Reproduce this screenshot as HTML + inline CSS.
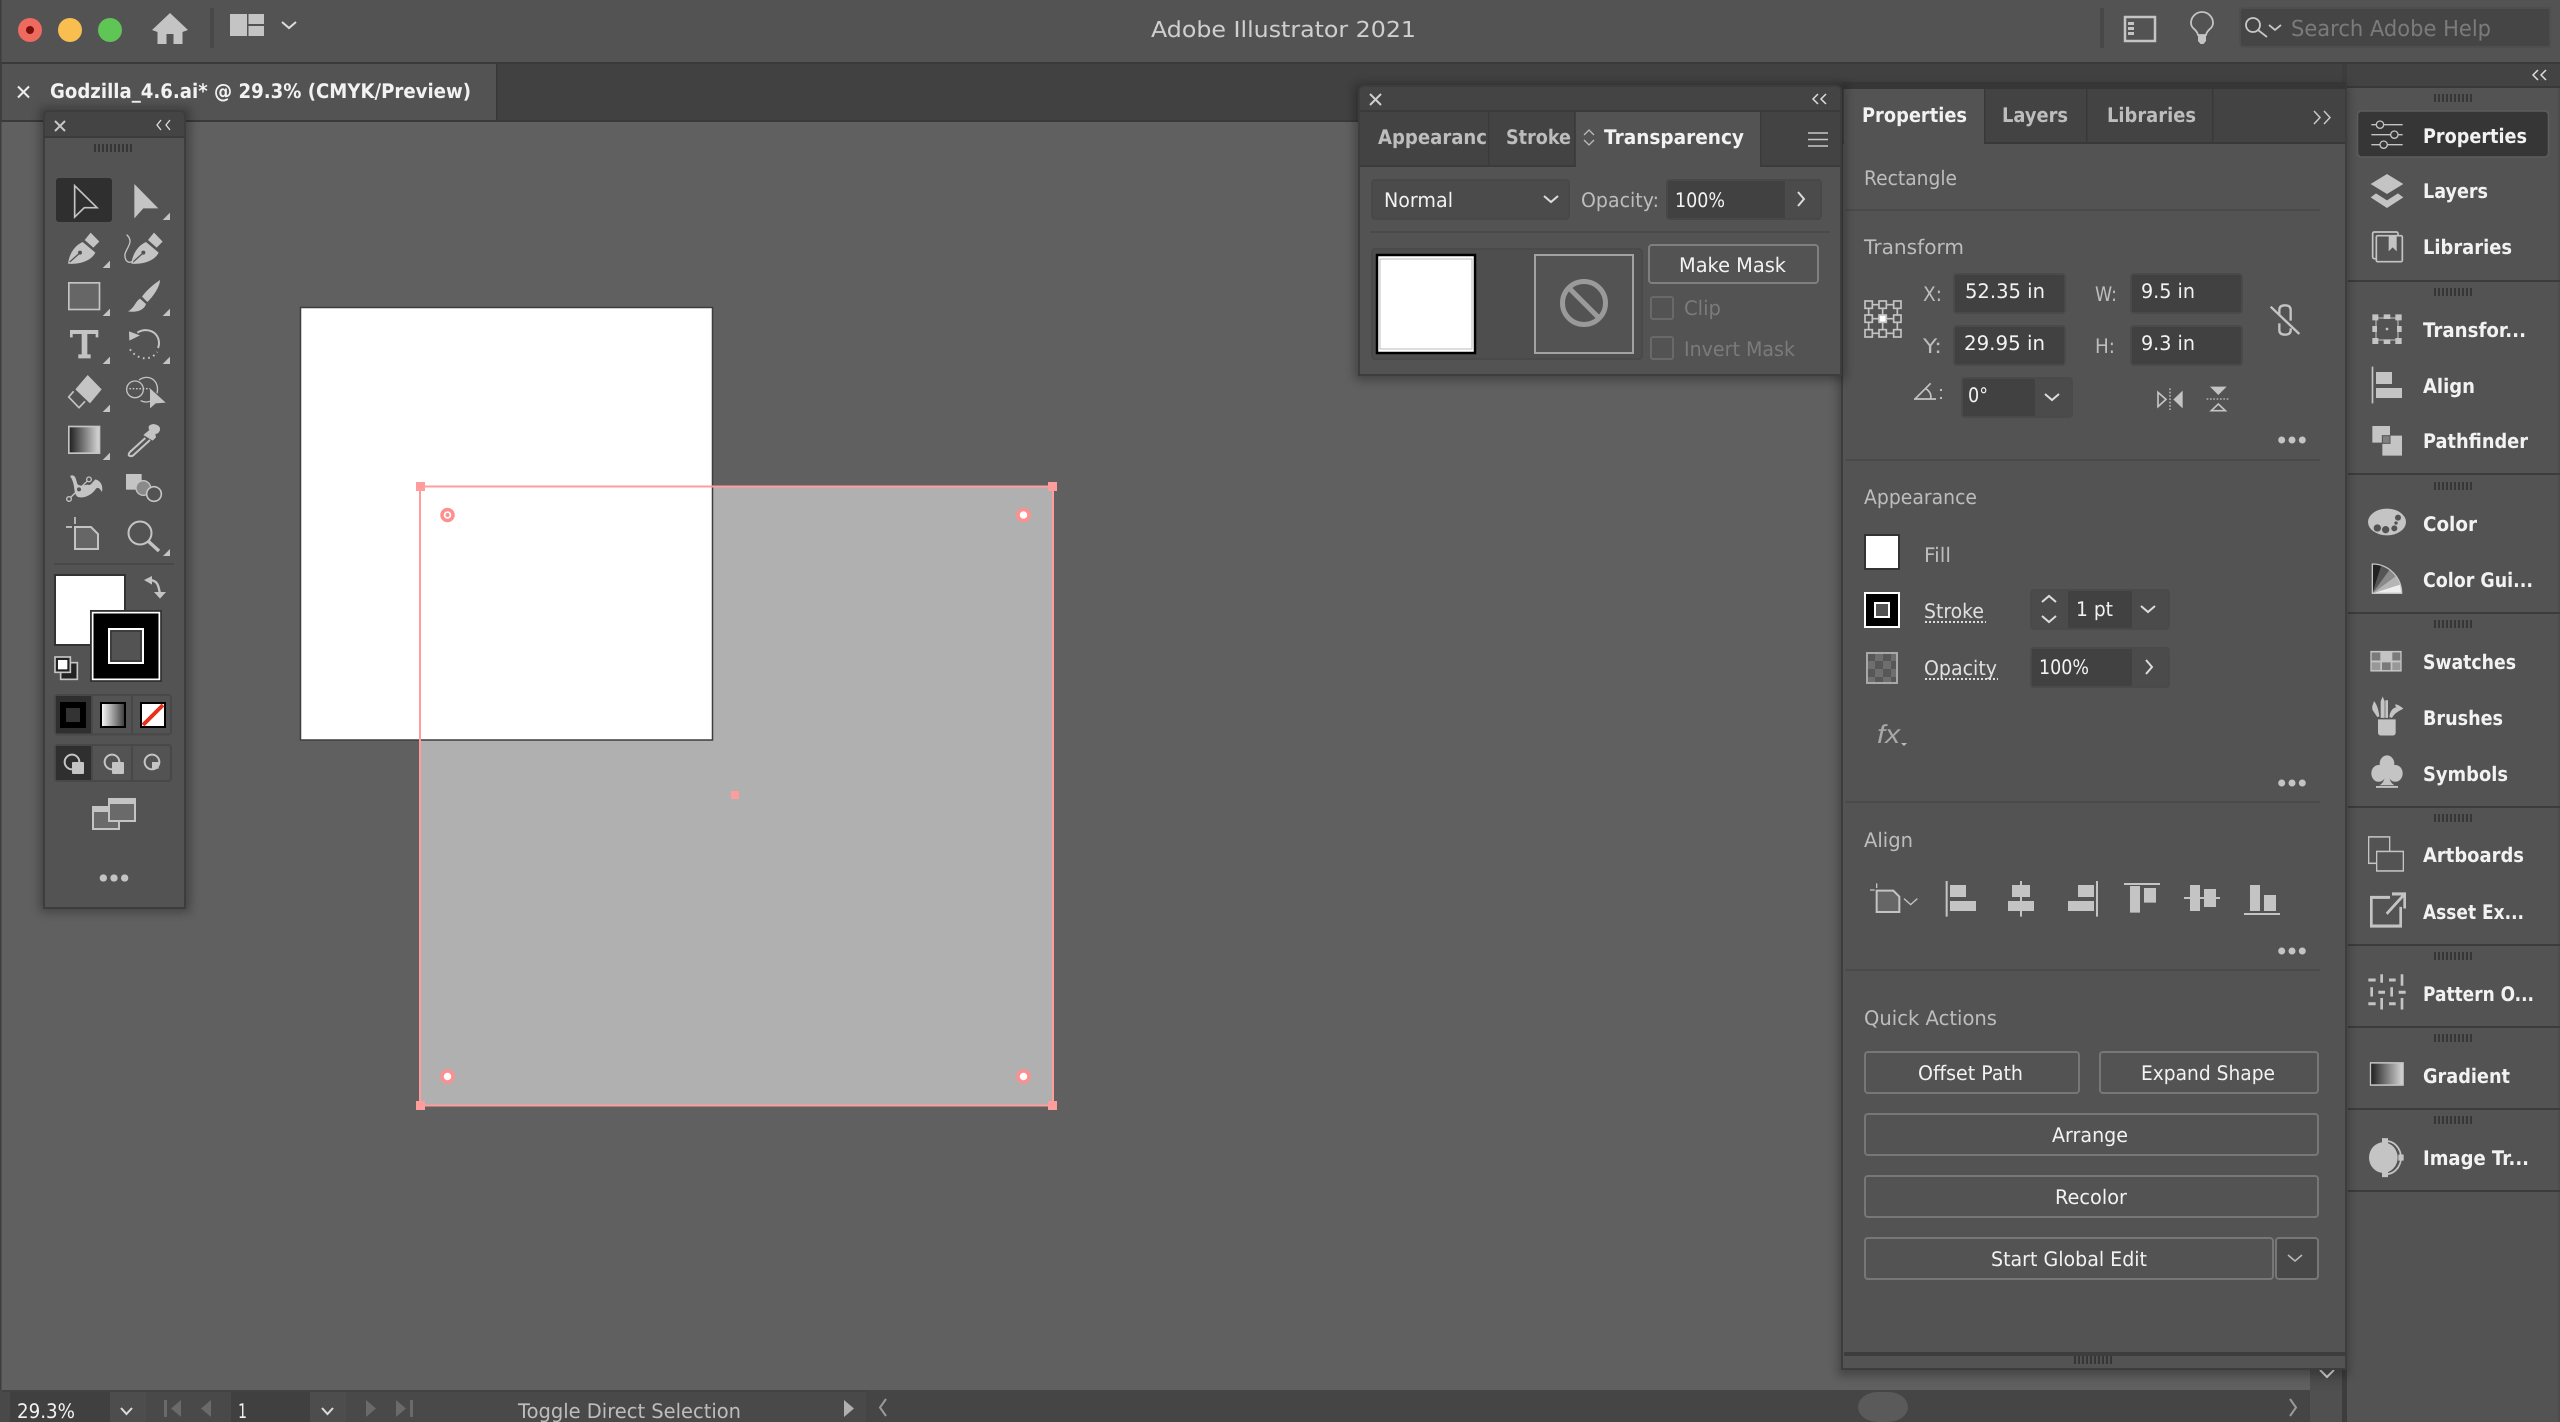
<!DOCTYPE html>
<html><head><meta charset="utf-8"><title>Adobe Illustrator 2021</title>
<style>
html,body{margin:0;padding:0;background:#606060;overflow:hidden}
svg{display:block}
text{font-family:"DejaVu Sans","Liberation Sans",sans-serif;font-size:20px;text-rendering:geometricPrecision}
.b{font-weight:bold}
.w{fill:#f2f2f2}.g{fill:#bdbdbd}.d{fill:#7b7b7b}
.i{fill:#c4c4c4}
.s{fill:none;stroke:#c4c4c4}
.c{fill:none;stroke:#dcdcdc;stroke-width:2}
</style></head><body>
<svg xmlns="http://www.w3.org/2000/svg" width="2560" height="1422" viewBox="0 0 2560 1422">
<defs>
<filter id="sh" x="-20%" y="-20%" width="140%" height="140%"><feGaussianBlur stdDeviation="5"/></filter>
<linearGradient id="gr"><stop offset="0" stop-color="#1e1e1e"/><stop offset="1" stop-color="#d8d8d8"/></linearGradient>
<linearGradient id="gw"><stop offset="0" stop-color="#fff"/><stop offset="1" stop-color="#3a3a3a"/></linearGradient>
<pattern id="ck" x="1867" y="653" width="16" height="16" patternUnits="userSpaceOnUse"><rect width="16" height="16" fill="#6e6e6e"/><rect width="8" height="8" fill="#575757"/><rect x="8" y="8" width="8" height="8" fill="#575757"/></pattern>
</defs>

<!-- canvas -->
<rect width="2560" height="1422" fill="#606060"/>

<!-- artwork -->
<rect x="420" y="486" width="633" height="619" fill="#b0b0b0"/>
<rect x="300.5" y="307.5" width="412" height="432.5" fill="#fff" stroke="#3d3d3d" stroke-width="1.5"/>
<rect x="420" y="486.5" width="633" height="619" fill="none" stroke="#ff9c9c" stroke-width="2"/>
<g fill="#ff9c9c"><rect x="416" y="482" width="9" height="9"/><rect x="1048" y="482" width="9" height="9"/><rect x="416" y="1101" width="9" height="9"/><rect x="1048" y="1101" width="9" height="9"/><rect x="731" y="791" width="8" height="8"/></g>
<g fill="#fff" stroke="#ff8f8f" stroke-width="3.500"><circle cx="447.500" cy="515" r="5.500"/><circle cx="1023.500" cy="515" r="5.500"/><circle cx="447.500" cy="1076.500" r="5.500"/><circle cx="1023.500" cy="1076.500" r="5.500"/></g>
<circle cx="447.500" cy="515" r="2" fill="#ff8f8f"/>

<!-- top bar -->
<rect width="2560" height="62" fill="#535353"/>
<rect y="62" width="2560" height="2" fill="#3a3a3a"/>
<circle cx="30" cy="30" r="12" fill="#ef6a5e"/><circle cx="30" cy="30" r="4" fill="#7a0f0a"/>
<circle cx="70" cy="30" r="12" fill="#f8bf50"/><circle cx="110" cy="30" r="12" fill="#5fc555"/>
<path class="i" d="M170 13 L188 30 L182.500 32 V44 H173.500 V34 H166.500 V44 H157.500 V32 L152 30Z"/>
<rect x="210" y="8" width="4" height="40" fill="#484848"/>
<path class="i" d="M230 14H247V36H230ZM248.500 14H264V24H248.500ZM248.500 26H264V36H248.500Z"/>
<path class="c" d="M282 22l7 6 7-6"/>
<text x="1151" y="37" textLength="265" lengthAdjust="spacingAndGlyphs" fill="#cfcfcf" style="font-size:22px">Adobe Illustrator 2021</text>
<rect x="2100" y="8" width="4" height="40" fill="#484848"/>
<rect x="2125" y="17" width="30" height="24" fill="none" stroke="#c4c4c4" stroke-width="2.500"/>
<path class="i" d="M2128 22h6v3h-6zM2128 27h6v3h-6zM2128 32h6v3h-6z"/>
<path class="s" stroke-width="1.800" d="M2198 35 C2197 29 2191 29 2191 23 A11 11 0 0 1 2213 23 C2213 29 2207 29 2206 35Z"/>
<path class="i" d="M2198 35h8v6l-2.500 3h-3l-2.500-3z"/>
<path d="M2550 8H2244Q2240 8 2240 12V43Q2240 47 2244 47H2550Z" fill="#454545" stroke="#4e4e4e" stroke-width="2"/>
<circle cx="2253" cy="25" r="7" fill="none" stroke="#c8c8c8" stroke-width="1.800"/>
<path class="s" stroke-width="1.800" d="M2258 30l9 7M2269 25l6 5 6-5"/>
<text x="2291" y="36" textLength="200" lengthAdjust="spacingAndGlyphs" class="d" style="font-size:22px">Search Adobe Help</text>

<!-- tab strip -->
<rect y="64" width="2560" height="56" fill="#414141"/>
<rect y="120" width="1359" height="2" fill="#3a3a3a"/>
<rect x="2" y="64" width="494" height="56" fill="#535353"/>
<rect x="496" y="64" width="1.500" height="56" fill="#383838"/>
<rect x="0" y="0" width="1.500" height="1422" fill="#3d3d3d"/>
<path d="M18 86.500l11 11M29 86.500l-11 11" stroke="#eee" stroke-width="2" fill="none"/>
<text x="50" y="98" textLength="421" lengthAdjust="spacingAndGlyphs" class="b w">Godzilla_4.6.ai* @ 29.3% (CMYK/Preview)</text>

<!-- status bar -->
<rect y="1390" width="2345" height="32" fill="#494949"/>
<rect y="1390" x="2" width="864" height="2" fill="#424242"/>
<rect x="866" y="1390" width="1444" height="32" fill="#454545"/>
<rect x="10" y="1392" width="100" height="30" fill="#404040"/>
<rect x="231" y="1392" width="79" height="30" fill="#404040"/>
<rect x="110" y="1392" width="36" height="30" fill="#4d4d4d"/>
<rect x="310" y="1392" width="36" height="30" fill="#4d4d4d"/>
<text x="17" y="1418" textLength="58" lengthAdjust="spacingAndGlyphs" class="w">29.3%</text>
<text x="238" y="1418" textLength="9" lengthAdjust="spacingAndGlyphs" class="w">1</text>
<path class="c" d="M121 1408l5.500 6 5.500-6M322 1408l5.500 6 5.500-6"/>
<g fill="#6a6a6a"><path d="M164 1400h3v17h-3zM181 1400v17l-10-8.500zM211 1400v17l-10-8.500zM366 1400v17l10-8.500zM396 1400v17l10-8.500zM410 1400h3v17h-3z"/></g>
<text x="518" y="1418" textLength="223" lengthAdjust="spacingAndGlyphs" class="g">Toggle Direct Selection</text>
<path d="M844 1400v17l10-8.500z" fill="#b0b0b0"/>
<path d="M886 1399l-6 8.500 6 8.500M2290 1399l6 8.500-6 8.500" fill="none" stroke="#9a9a9a" stroke-width="2"/>
<rect x="1858" y="1392" width="50" height="30" rx="20" fill="#5a5a5a"/>
<rect x="2310" y="1369" width="32" height="21" fill="#4e4e4e"/>
<rect x="2310" y="1390" width="32" height="32" fill="#505050"/>
<path class="c" d="M2320 1370l7 7 7-7"/>
<rect x="2342" y="64" width="6" height="1358" fill="#3d3d3d"/>

<!-- dock -->
<rect x="2347" y="64" width="213" height="1358" fill="#535353"/>
<rect x="2347" y="64" width="213" height="22" fill="#434343"/>
<rect x="2347" y="86" width="213" height="2" fill="#393939"/>
<rect x="2558" y="88" width="2" height="1334" fill="#4c4c4c"/>
<path d="M2538 70l-5 5 5 5M2546 70l-5 5 5 5" fill="none" stroke="#ddd" stroke-width="1.500"/>
<rect x="2357.500" y="111" width="191" height="46" rx="4" fill="#363636" stroke="#5d5d5d" stroke-width="1.500"/>
<g fill="#3c3c3c"><rect x="2348" y="280" width="212" height="2"/><rect x="2348" y="473" width="212" height="2"/><rect x="2348" y="612" width="212" height="2"/><rect x="2348" y="806" width="212" height="2"/><rect x="2348" y="944" width="212" height="2"/><rect x="2348" y="1026" width="212" height="2"/><rect x="2348" y="1108" width="212" height="2"/><rect x="2348" y="1190" width="212" height="2"/></g>
<path fill="none" stroke="#363636" stroke-width="8" stroke-dasharray="2 2" d="M2434 98H2472M2434 292H2472M2434 486H2472M2434 624H2472M2434 818H2472M2434 956H2472M2434 1038H2472M2434 1120H2472"/>
<g class="b w">
<text class="b w" x="2423" y="143" textLength="104" lengthAdjust="spacingAndGlyphs">Properties</text>
<text class="b w" x="2423" y="198" textLength="65" lengthAdjust="spacingAndGlyphs">Layers</text>
<text class="b w" x="2423" y="254" textLength="89" lengthAdjust="spacingAndGlyphs">Libraries</text>
<text class="b w" x="2423" y="337" textLength="103" lengthAdjust="spacingAndGlyphs">Transfor...</text>
<text class="b w" x="2423" y="393" textLength="52" lengthAdjust="spacingAndGlyphs">Align</text>
<text class="b w" x="2423" y="448" textLength="105" lengthAdjust="spacingAndGlyphs">Pathfinder</text>
<text class="b w" x="2423" y="531" textLength="54" lengthAdjust="spacingAndGlyphs">Color</text>
<text class="b w" x="2423" y="587" textLength="110" lengthAdjust="spacingAndGlyphs">Color Gui...</text>
<text class="b w" x="2423" y="669" textLength="93" lengthAdjust="spacingAndGlyphs">Swatches</text>
<text class="b w" x="2423" y="725" textLength="80" lengthAdjust="spacingAndGlyphs">Brushes</text>
<text class="b w" x="2423" y="781" textLength="85" lengthAdjust="spacingAndGlyphs">Symbols</text>
<text class="b w" x="2423" y="862" textLength="101" lengthAdjust="spacingAndGlyphs">Artboards</text>
<text class="b w" x="2423" y="919" textLength="101" lengthAdjust="spacingAndGlyphs">Asset Ex...</text>
<text class="b w" x="2423" y="1001" textLength="111" lengthAdjust="spacingAndGlyphs">Pattern O...</text>
<text class="b w" x="2423" y="1083" textLength="87" lengthAdjust="spacingAndGlyphs">Gradient</text>
<text class="b w" x="2423" y="1165" textLength="106" lengthAdjust="spacingAndGlyphs">Image Tr...</text>
</g>
<!-- dock icons top -->
<g transform="translate(2340,90) scale(.33333)">
<path class="s" stroke-width="4" d="M94 104H188M94 134H188M94 164H188"/>
<g fill="#363636" stroke="#c4c4c4" stroke-width="4"><circle cx="120" cy="104" r="11"/><circle cx="163" cy="134" r="11"/><circle cx="131" cy="164" r="11"/></g>
<path class="i" d="M141 252L190 282L141 312L92 282Z"/>
<path class="i" d="M92 322L108 310L141 331L174 310L190 322L141 354Z"/>
<rect x="98" y="426" width="76" height="80" rx="5" fill="none" stroke="#c4c4c4" stroke-width="5"/>
<rect x="109" y="437" width="78" height="78" rx="4" fill="#535353" stroke="#c4c4c4" stroke-width="5"/>
<path class="i" d="M146 437H170V484L158 472L146 484Z"/>
<rect x="108" y="684" width="66" height="66" fill="none" stroke="#c4c4c4" stroke-width="3"/>
<path class="i" d="M97 673h18v18h-18zM131 673h20v14h-20zM166 673h19v18h-19zM97 708h14v18h-14zM171 708h14v18h-14zM97 744h18v18h-18zM131 748h20v14h-20zM166 744h19v18h-19z"/>
<circle class="i" cx="141" cy="717" r="4"/>
<path class="i" d="M95 830h5v110h-5zM108 846h48v36h-48zM108 894h78v30h-78z"/>
<path class="i" d="M97 1008h53v50h-53zM127 1037h59v60h-59z"/>
<rect x="127" y="1037" width="23" height="23" fill="#7f7f7f" stroke="#535353" stroke-width="3"/>
<ellipse class="i" cx="141" cy="1296" rx="57" ry="40"/>
<g fill="#535353"><circle cx="112" cy="1314" r="11"/><circle cx="137" cy="1319" r="11"/><circle cx="163" cy="1315" r="9"/><circle cx="174" cy="1283" r="9"/><circle cx="168" cy="1299" r="5"/></g>
<path d="M97 1510L97 1422A88 88 0 0 1 124 1426Z" fill="#222"/><path d="M97 1510L124 1426A88 88 0 0 1 149 1439Z" fill="#555"/><path d="M97 1510L149 1439A88 88 0 0 1 168 1458Z" fill="#8a8a8a"/><path d="M97 1510L168 1458A88 88 0 0 1 181 1483Z" fill="#b5b5b5"/><path d="M97 1510L181 1483A88 88 0 0 1 185 1510Z" fill="#eee"/>
<path class="s" stroke-width="4" d="M97 1510V1422A88 88 0 0 1 185 1510Z"/>
</g>
<!-- dock icons bottom -->
<g transform="translate(2340,600) scale(.33333,.3827)">
<rect x="91" y="133" width="94" height="54" class="i"/>
<g fill="#7a7a7a"><rect x="95" y="137" width="26" height="21"/><rect x="157" y="137" width="24" height="21"/><rect x="126" y="163" width="26" height="20"/></g>
<g fill="#989898"><rect x="95" y="163" width="26" height="20"/><rect x="157" y="163" width="24" height="20"/></g>
<path class="i" d="M114 312h53v34q0 8-8 8h-37q-8 0-8-8zM122 308V265L128 252L134 265V308ZM136 308V262H144V308ZM148 306C150 290 158 282 170 280C158 272 170 268 190 284C178 290 165 294 156 308ZM112 306L98 288C94 278 100 272 102 264C110 272 116 286 118 304Z"/>
<circle class="i" cx="141" cy="428" r="22"/><circle class="i" cx="116" cy="453" r="22"/><circle class="i" cx="166" cy="453" r="22"/>
<path class="i" d="M136 445H146C146 465 150 478 164 484H118C132 478 136 465 136 445ZM108 486h66v5h-66z"/>
<rect x="86" y="619" width="63" height="69" fill="none" stroke="#c4c4c4" stroke-width="4"/>
<rect x="110" y="657" width="80" height="51" fill="#535353" stroke="#c4c4c4" stroke-width="4"/>
<path class="s" stroke-width="8" d="M150 777H94V852H182V802M140 820L190 772"/>
<path class="i" d="M156 764H198V806H190V772H156Z"/>
<path class="s" stroke-width="8" d="M85 993H107M147 993H167M125 978V1000M186 978V1008M95 1012V1036M115 1025H135M155 1012V1036M176 1025H197M85 1055H107M147 1055H167M125 1040V1070M186 1040V1070"/>
<rect x="91.500" y="1209.500" width="98" height="58" fill="url(#gr)" stroke="#c4c4c4" stroke-width="4"/>
<ellipse class="i" cx="130" cy="1457" rx="43" ry="40"/>
<path class="s" stroke-width="5" d="M135 1414A44 44 0 0 1 183 1457A44 44 0 0 1 135 1500"/>
<path class="i" d="M126 1406h18v15h-18zM175 1449h16v16h-16zM126 1493h18v15h-18z"/>
</g>

<!-- properties panel -->
<rect x="1838" y="86" width="510" height="1290" fill="#000" opacity=".28" filter="url(#sh)"/>
<rect x="1842" y="88" width="504" height="1281" fill="#535353" stroke="#3d3d3d" stroke-width="2"/>
<rect x="1843" y="82" width="503" height="7" fill="#363636"/>
<rect x="1843" y="89" width="502" height="53" fill="#434343"/>
<rect x="1843" y="142" width="502" height="2" fill="#393939"/>
<rect x="1844" y="89" width="140" height="55" fill="#535353"/>
<rect x="1984" y="89" width="1.500" height="54" fill="#393939"/>
<rect x="2086" y="89" width="1.500" height="54" fill="#393939"/>
<rect x="2212" y="89" width="1.500" height="54" fill="#393939"/>
<text class="b w" x="1862" y="122" textLength="105" lengthAdjust="spacingAndGlyphs">Properties</text>
<text class="b g" x="2002" y="122" textLength="66" lengthAdjust="spacingAndGlyphs">Layers</text>
<text class="b g" x="2107" y="122" textLength="89" lengthAdjust="spacingAndGlyphs">Libraries</text>
<path d="M2314 111l6 6.500-6 6.500M2324 111l6 6.500-6 6.500" fill="none" stroke="#c8c8c8" stroke-width="1.500"/>
<g fill="#4a4a4a"><rect x="1845" y="209" width="475" height="2"/><rect x="1845" y="459" width="475" height="2"/><rect x="1845" y="801" width="475" height="2"/><rect x="1845" y="969" width="475" height="2"/></g>
<text class="g" x="1864" y="185" textLength="93" lengthAdjust="spacingAndGlyphs">Rectangle</text>
<text class="g" x="1864" y="254" textLength="100" lengthAdjust="spacingAndGlyphs">Transform</text>
<g transform="translate(1840,80) scale(.33333)">
<path class="s" stroke-width="5" d="M98 674H116M140 674H160M98 716H116M140 716H160M98 760H116M140 760H160M86 686V704M86 728V748M128 686V704M128 728V748M172 686V704M172 728V748"/>
<g fill="none" stroke="#c4c4c4" stroke-width="5"><rect x="75" y="663" width="22" height="22"/><rect x="117" y="663" width="22" height="22"/><rect x="161" y="663" width="22" height="22"/><rect x="75" y="705" width="22" height="22"/><rect x="161" y="705" width="22" height="22"/><rect x="75" y="749" width="22" height="22"/><rect x="117" y="749" width="22" height="22"/><rect x="161" y="749" width="22" height="22"/></g>
<rect x="117" y="705" width="22" height="22" fill="#fff" stroke="#c4c4c4" stroke-width="5"/>
<path class="s" stroke-width="7" d="M1292 680L1378 762"/>
<path class="s" stroke-width="7" d="M1318 706V690Q1318 676 1335 676Q1352 676 1352 690V722M1318 730V750Q1318 764 1335 764Q1352 764 1352 750V745"/>
<path class="s" stroke-width="5" d="M226 956L272 910M222 957H288M256 925Q276 938 272 955"/>
<circle class="i" cx="303" cy="930" r="3.500"/><circle class="i" cx="303" cy="954" r="3.500"/>
<path class="s" stroke-width="4" stroke-dasharray="5 5" d="M990 925V992M1100 957H1168"/>
<path class="s" stroke-width="5" d="M954 937V980L978 958Z"/><path class="i" d="M1028 932V985L1000 958.500Z"/>
<path class="i" d="M1110 920H1160L1135 945Z"/><path class="s" stroke-width="5" d="M1114 992H1156L1135 972Z"/>
</g>
<!-- fields -->
<g fill="#414141" stroke="#4a4a4a" stroke-width="2">
<rect x="1954" y="274" width="111" height="39" rx="3"/><rect x="2131" y="274" width="111" height="39" rx="3"/>
<rect x="1954" y="326" width="111" height="39" rx="3"/><rect x="2131" y="326" width="111" height="39" rx="3"/>
</g>
<rect x="1962" y="378" width="110" height="39" rx="3" fill="#4b4b4b" stroke="#4a4a4a" stroke-width="2"/>
<rect x="1963" y="379" width="72" height="37" rx="2" fill="#414141"/>
<text class="g" x="1923" y="301" textLength="19" lengthAdjust="spacingAndGlyphs">X:</text>
<text class="g" x="2095" y="301" textLength="22" lengthAdjust="spacingAndGlyphs">W:</text>
<text class="g" x="1923" y="353" textLength="19" lengthAdjust="spacingAndGlyphs">Y:</text>
<text class="g" x="2095" y="353" textLength="20" lengthAdjust="spacingAndGlyphs">H:</text>
<text class="w" x="1965" y="298" textLength="80" lengthAdjust="spacingAndGlyphs">52.35 in</text>
<text class="w" x="2141" y="298" textLength="54" lengthAdjust="spacingAndGlyphs">9.5 in</text>
<text class="w" x="1964" y="350" textLength="81" lengthAdjust="spacingAndGlyphs">29.95 in</text>
<text class="w" x="2141" y="350" textLength="54" lengthAdjust="spacingAndGlyphs">9.3 in</text>
<text class="w" x="1968" y="402" textLength="20" lengthAdjust="spacingAndGlyphs">0°</text>
<path class="c" d="M2045 394l7 6 7-6"/>
<g class="i"><circle cx="2281.700" cy="440" r="3.500"/><circle cx="2292" cy="440" r="3.500"/><circle cx="2302.300" cy="440" r="3.500"/><circle cx="2281.700" cy="783" r="3.500"/><circle cx="2292" cy="783" r="3.500"/><circle cx="2302.300" cy="783" r="3.500"/><circle cx="2281.700" cy="951" r="3.500"/><circle cx="2292" cy="951" r="3.500"/><circle cx="2302.300" cy="951" r="3.500"/></g>

<!-- appearance -->
<text class="g" x="1864" y="504" textLength="113" lengthAdjust="spacingAndGlyphs">Appearance</text>
<rect x="1865" y="535" width="34" height="34" fill="#fff" stroke="#333" stroke-width="2"/>
<text class="g" x="1924" y="562" textLength="27" lengthAdjust="spacingAndGlyphs">Fill</text>
<rect x="1865" y="593" width="34" height="34" fill="#000" stroke="#fff" stroke-width="2"/>
<rect x="1875" y="603" width="14" height="14" fill="#535353" stroke="#fff" stroke-width="2"/>
<text fill="#e0e0e0" x="1924" y="618" textLength="60" lengthAdjust="spacingAndGlyphs">Stroke</text>
<path d="M1925 622H1986" stroke="#ddd" stroke-width="2" stroke-dasharray="2 2"/>
<rect x="2031" y="590" width="138" height="39" rx="3" fill="#4b4b4b" stroke="#4a4a4a" stroke-width="2"/>
<rect x="2068" y="591" width="64" height="37" fill="#414141"/>
<path class="c" d="M2042 602l7-6 7 6M2042 616l7 6 7-6M2141 606l7 6 7-6"/>
<text class="w" x="2076" y="616" textLength="37" lengthAdjust="spacingAndGlyphs">1 pt</text>
<rect x="1867" y="653" width="30" height="30" fill="url(#ck)" stroke="#a8a8a8" stroke-width="2"/>
<text fill="#e0e0e0" x="1924" y="675" textLength="73" lengthAdjust="spacingAndGlyphs">Opacity</text>
<path d="M1925 679H1998" stroke="#ddd" stroke-width="2" stroke-dasharray="2 2"/>
<rect x="2031" y="648" width="138" height="39" rx="3" fill="#4b4b4b" stroke="#4a4a4a" stroke-width="2"/>
<rect x="2032" y="649" width="100" height="37" fill="#414141"/>
<path class="c" d="M2146 660l6 7-6 7"/>
<text class="w" x="2039" y="674" textLength="50" lengthAdjust="spacingAndGlyphs">100%</text>
<text x="1877" y="743" textLength="23" lengthAdjust="spacingAndGlyphs" fill="#a8a8a8" style="font-family:'Liberation Sans',sans-serif;font-style:italic;font-size:26px">fx</text>
<path d="M1901 743h6l-3 3z" fill="#bbb"/>

<!-- align -->
<text class="g" x="1864" y="847" textLength="49" lengthAdjust="spacingAndGlyphs">Align</text>
<g transform="translate(1840,470) scale(.33333)">
<path d="M110 1262H160L178 1280V1326H110Z" fill="#666" stroke="#c4c4c4" stroke-width="6"/>
<path class="s" stroke-width="4" d="M90 1260H104M110 1240V1254M192 1286L212 1304L232 1286"/>
<path class="i" d="M317 1233h6v107h-6zM330 1245h48v36h-48zM330 1293h78v30h-78z"/>
<path class="i" d="M540 1233h6v107h-6zM516 1245h54v36h-54zM504 1293h78v30h-78z"/>
<path class="i" d="M768 1233h6v107h-6zM714 1245h48v36h-48zM684 1293h78v30h-78z"/>
<path class="i" d="M852 1239h108v6h-108zM870 1248h30v80h-30zM912 1254h36v44h-36z"/>
<path class="i" d="M1032 1281h108v6h-108zM1050 1245h30v78h-30zM1092 1257h36v54h-36z"/>
<path class="i" d="M1212 1329h108v6h-108zM1230 1245h30v78h-30zM1272 1275h36v48h-36z"/>
</g>

<!-- quick actions -->
<text class="g" x="1864" y="1025" textLength="133" lengthAdjust="spacingAndGlyphs">Quick Actions</text>
<g fill="none" stroke="#777" stroke-width="2">
<rect x="1865" y="1052" width="214" height="41" rx="3"/><rect x="2100" y="1052" width="218" height="41" rx="3"/>
<rect x="1865" y="1114" width="453" height="41" rx="3"/><rect x="1865" y="1176" width="453" height="41" rx="3"/>
<rect x="1865" y="1238" width="408" height="41" rx="3"/><rect x="2276" y="1238" width="42" height="41" rx="3" fill="#484848"/>
</g>
<text class="w" x="1918" y="1080" textLength="105" lengthAdjust="spacingAndGlyphs">Offset Path</text>
<text class="w" x="2141" y="1080" textLength="134" lengthAdjust="spacingAndGlyphs">Expand Shape</text>
<text class="w" x="2052" y="1142" textLength="76" lengthAdjust="spacingAndGlyphs">Arrange</text>
<text class="w" x="2055" y="1204" textLength="72" lengthAdjust="spacingAndGlyphs">Recolor</text>
<text class="w" x="1991" y="1266" textLength="156" lengthAdjust="spacingAndGlyphs">Start Global Edit</text>
<path d="M2288 1255l7 6 7-6" fill="none" stroke="#bbb" stroke-width="1.500"/>
<rect x="1844" y="1352" width="501" height="4" fill="#3d3d3d"/>
<path fill="none" stroke="#363636" stroke-width="8" stroke-dasharray="2 2" d="M2074 1360H2113"/>

<!-- transparency panel -->
<rect x="1355" y="84" width="490" height="296" fill="#000" opacity=".3" filter="url(#sh)"/>
<path d="M1359 375V92Q1359 86 1365 86H1835Q1841 86 1841 92V375Z" fill="#535353" stroke="#3d3d3d" stroke-width="2"/>
<path d="M1360 111V92Q1360 87 1365 87H1835Q1840 87 1840 92V111Z" fill="#444"/>
<rect x="1360" y="111" width="480" height="54" fill="#434343"/>
<rect x="1360" y="110" width="480" height="2" fill="#3b3b3b"/>
<rect x="1360" y="165" width="480" height="2" fill="#3b3b3b"/>
<rect x="1576" y="112" width="184" height="55" fill="#535353"/>
<rect x="1488" y="112" width="1.500" height="53" fill="#3b3b3b"/>
<rect x="1574" y="112" width="1.500" height="53" fill="#3b3b3b"/>
<rect x="1760" y="112" width="1.500" height="53" fill="#3b3b3b"/>
<path d="M1370 94l11 11M1381 94l-11 11" stroke="#cfcfcf" stroke-width="2" fill="none"/>
<path d="M1818 94l-5 5 5 5M1826 94l-5 5 5 5" fill="none" stroke="#ddd" stroke-width="1.500"/>
<text class="b g" x="1378" y="144" textLength="109" lengthAdjust="spacingAndGlyphs">Appearanc</text>
<text class="b g" x="1506" y="144" textLength="65" lengthAdjust="spacingAndGlyphs">Stroke</text>
<path d="M1584 135l5-5 5 5M1584 140l5 5 5-5" fill="none" stroke="#bbb" stroke-width="1.300"/>
<text class="b w" x="1604" y="144" textLength="140" lengthAdjust="spacingAndGlyphs">Transparency</text>
<path d="M1808 133H1828M1808 139.500H1828M1808 146H1828" stroke="#c8c8c8" stroke-width="1.500"/>
<rect x="1372" y="180" width="197" height="39" rx="3" fill="#4b4b4b" stroke="#484848" stroke-width="2"/>
<text class="w" x="1384" y="207" textLength="69" lengthAdjust="spacingAndGlyphs">Normal</text>
<path class="c" d="M1544 196l7 6 7-6"/>
<text class="g" x="1581" y="207" textLength="78" lengthAdjust="spacingAndGlyphs">Opacity:</text>
<rect x="1667" y="180" width="154" height="39" rx="3" fill="#4b4b4b" stroke="#484848" stroke-width="2"/>
<rect x="1668" y="181" width="117" height="37" fill="#414141"/>
<text class="w" x="1675" y="207" textLength="50" lengthAdjust="spacingAndGlyphs">100%</text>
<path class="c" d="M1798 192l6 7-6 7"/>
<rect x="1370" y="231" width="460" height="2" fill="#4a4a4a"/>
<rect x="1372" y="249" width="270" height="110" rx="3" fill="#4e4e4e" stroke="#4a4a4a" stroke-width="2"/>
<rect x="1377" y="255" width="98" height="98" fill="#fff" stroke="#000" stroke-width="2.500"/>
<rect x="1380" y="259" width="92" height="90" fill="none" stroke="#bbb" stroke-width="1"/>
<rect x="1535" y="255" width="98" height="98" fill="#535353" stroke="#a3a3a3" stroke-width="2"/>
<circle cx="1584" cy="303" r="21.500" fill="none" stroke="#9a9a9a" stroke-width="5"/>
<path d="M1569 288L1599 318" stroke="#9a9a9a" stroke-width="5"/>
<rect x="1649" y="245" width="169" height="38" rx="3" fill="none" stroke="#7f7f7f" stroke-width="2"/>
<text class="w" x="1679" y="272" textLength="107" lengthAdjust="spacingAndGlyphs">Make Mask</text>
<rect x="1651" y="297" width="22" height="22" rx="2" fill="none" stroke="#696969" stroke-width="2"/>
<rect x="1651" y="337" width="22" height="22" rx="2" fill="none" stroke="#696969" stroke-width="2"/>
<text class="d" x="1684" y="315" textLength="37" lengthAdjust="spacingAndGlyphs">Clip</text>
<text class="d" x="1684" y="356" textLength="111" lengthAdjust="spacingAndGlyphs">Invert Mask</text>

<!-- toolbar -->
<rect x="40" y="108" width="150" height="804" fill="#000" opacity=".3" filter="url(#sh)"/>
<path d="M44 908V116Q44 111 49 111H180Q185 111 185 116V908Z" fill="#535353" stroke="#3d3d3d" stroke-width="2"/>
<path d="M45 136V116Q45 112 49 112H180Q184 112 184 116V136Z" fill="#444"/>
<rect x="44" y="136" width="141" height="2" fill="#3b3b3b"/>
<path d="M55 121l10 10M65 121l-10 10" stroke="#c8c8c8" stroke-width="2" fill="none"/>
<path d="M161 120l-4 5 4 5M170 120l-4 5 4 5" fill="none" stroke="#ddd" stroke-width="1.300"/>
<path fill="none" stroke="#363636" stroke-width="8" stroke-dasharray="2 2" d="M94 148H132"/>
<rect x="56" y="178" width="56" height="44" rx="3" fill="#2f2f2f"/>
<g transform="translate(30,110) scale(.33333)">
<path d="M134 227L201 293H163L134 321Z" fill="none" stroke="#c4c4c4" stroke-width="5"/>
<path class="i" d="M313 222L385 295H340L313 325Z"/>
<g class="i"><path d="M420 308V330H398Z"/><path d="M240 452V474H218Z"/><path d="M240 596V618H218Z"/><path d="M420 596V618H398Z"/><path d="M240 740V762H218Z"/><path d="M420 740V762H398Z"/><path d="M240 884V906H218Z"/><path d="M240 1028V1050H218Z"/></g>
<path class="i" d="M114 461C118 432 132 408 158 396L196 428C184 452 150 464 114 461Z"/>
<path d="M119 456L146 432" stroke="#535353" stroke-width="4"/><circle cx="150" cy="428" r="6" fill="#535353"/>
<path class="i" d="M164 390L182 368L208 395L190 413Z"/>
<path class="i" d="M304 461C308 432 322 408 348 396L386 428C374 452 340 464 304 461Z"/>
<path d="M309 456L336 432" stroke="#535353" stroke-width="4"/><circle cx="340" cy="428" r="6" fill="#535353"/>
<path class="i" d="M354 390L372 368L398 395L380 413Z"/>
<path class="s" stroke-width="4" d="M290 374C312 395 292 410 285 432C282 458 304 466 314 444"/>
<rect x="116.500" y="518.500" width="92" height="80" fill="#666" stroke="#c4c4c4" stroke-width="5"/>
<path class="i" d="M390 510C390 530 368 562 352 576L336 560C352 538 372 522 390 510ZM330 566L348 582C342 602 318 608 294 604C312 596 316 574 330 566Z"/>
<path class="i" d="M120 660H205V682H197V672H172V733H182V745H145V733H155V672H128V682H120Z"/>
<path class="s" stroke-width="6" d="M322 668C350 650 388 665 387 702C386 708 385 712 384 714"/>
<path class="i" d="M297 664L330 676L298 692Z"/>
<path class="s" stroke-width="6" stroke-dasharray="5 11" d="M300 718C320 748 360 756 382 726"/>
<path class="i" d="M173 795L215 838L180 880L136 838Z"/>
<path class="s" stroke-width="5" d="M131 844L116 861L147 893L165 874"/>
<circle cx="315" cy="838" r="25" fill="none" stroke="#c4c4c4" stroke-width="4"/>
<path class="s" stroke-width="4" d="M327 810C355 790 390 810 381 850M332 872C345 878 352 876 360 874"/>
<path d="M298 836H360" stroke="#c4c4c4" stroke-width="4" stroke-dasharray="5 5"/>
<path class="i" d="M360 835L407 878L377 880L360 895Z"/>
<rect x="116.500" y="949.500" width="92" height="80" fill="url(#gr)" stroke="#c4c4c4" stroke-width="5"/>
<path class="i" d="M340 975L358 960Q350 945 370 942Q392 945 390 960Q386 972 376 972L378 982L368 992Z"/>
<path class="s" stroke-width="6" d="M346 984L300 1026Q292 1036 300 1038Q308 1040 314 1032L360 990"/>
<path class="i" d="M120 1098C136 1090 138 1108 142 1122C150 1130 160 1126 172 1124C182 1128 184 1120 196 1108C212 1112 220 1126 216 1146C210 1136 204 1130 198 1136C186 1156 158 1168 142 1160C128 1146 138 1124 120 1098Z"/>
<path class="s" stroke-width="4" d="M117 1167L177 1108"/>
<g fill="#535353" stroke="#c4c4c4" stroke-width="4"><circle cx="117" cy="1167" r="7"/><circle cx="177" cy="1108" r="7"/><circle cx="147" cy="1138" r="8"/></g>
<rect class="i" x="288" y="1092" width="47" height="47"/>
<circle cx="340" cy="1134" r="22" fill="#8a8a8a" stroke="#c4c4c4" stroke-width="4"/>
<circle cx="372" cy="1152" r="22" fill="#535353" stroke="#c4c4c4" stroke-width="5"/>
</g>
<path class="s" stroke-width="1.700" d="M75 517V524M66 527H72"/>
<path d="M75 527H91L98 534V549H75Z" fill="#666" stroke="#c4c4c4" stroke-width="2"/>
<circle cx="140" cy="533" r="11.500" fill="none" stroke="#c4c4c4" stroke-width="2"/>
<path class="s" stroke-width="3.500" d="M148 541L159 551"/>
<path class="i" d="M170 549V556H163Z"/>
<rect x="54" y="563" width="120" height="2" fill="#484848"/>
<g transform="translate(30,530) scale(.33333)">
<rect x="75" y="135" width="210" height="210" fill="#fff" stroke="#333" stroke-width="6"/>
<path class="s" stroke-width="7" d="M358 150C384 150 386 170 390 192"/>
<path class="i" d="M342 150L366 138V164ZM372 186H408L390 206Z"/>
<rect x="92" y="398" width="50" height="50" fill="#222" stroke="#c4c4c4" stroke-width="5"/>
<rect x="75" y="381" width="46" height="46" fill="#222" stroke="#c4c4c4" stroke-width="5"/>
<rect x="84" y="390" width="28" height="28" fill="#fff"/>
<rect x="183" y="243" width="210" height="210" fill="#000" stroke="#333" stroke-width="6"/>
<rect x="188" y="248" width="200" height="200" fill="#000" stroke="#fff" stroke-width="5"/>
<rect x="237" y="297" width="102" height="102" fill="#535353" stroke="#fff" stroke-width="6"/>
<rect x="243" y="303" width="90" height="90" fill="none" stroke="#333" stroke-width="4"/>
<rect x="75" y="495" width="348" height="118" rx="8" fill="#535353" stroke="#484848" stroke-width="6"/>
<rect x="78" y="498" width="105" height="112" fill="#2f2f2f"/>
<path d="M186 495V613M306 495V613" stroke="#484848" stroke-width="6"/>
<rect x="90" y="516" width="78" height="78" fill="#000"/><rect x="108" y="534" width="42" height="42" fill="#333"/>
<rect x="213" y="519" width="72" height="72" fill="url(#gw)" stroke="#000" stroke-width="6"/>
<rect x="333" y="519" width="72" height="72" fill="#fff" stroke="#000" stroke-width="6"/>
<path d="M339 585L399 525" stroke="#e8301f" stroke-width="12"/>
<rect x="75" y="645" width="348" height="108" rx="8" fill="#535353" stroke="#484848" stroke-width="6"/>
<rect x="78" y="648" width="105" height="102" fill="#2f2f2f"/>
<path d="M186 645V753M306 645V753" stroke="#484848" stroke-width="6"/>
<circle cx="126" cy="696" r="22" fill="none" stroke="#c4c4c4" stroke-width="6"/><rect class="i" x="126" y="696" width="36" height="36" rx="3"/>
<circle cx="246" cy="696" r="22" fill="none" stroke="#c4c4c4" stroke-width="6"/><rect class="i" x="246" y="696" width="36" height="36" rx="3"/>
<circle cx="366" cy="696" r="22" fill="none" stroke="#c4c4c4" stroke-width="6"/><rect class="i" x="366" y="696" width="20" height="20"/>
<rect x="189" y="831" width="78" height="66" fill="#6a6a6a" stroke="#c4c4c4" stroke-width="6"/><rect class="i" x="186" y="828" width="84" height="18"/>
<rect x="237" y="807" width="78" height="66" fill="#6a6a6a" stroke="#c4c4c4" stroke-width="6"/><rect class="i" x="234" y="804" width="84" height="18"/>
<circle class="i" cx="220" cy="1044" r="11"/><circle class="i" cx="252" cy="1044" r="11"/><circle class="i" cx="284" cy="1044" r="11"/>
</g>
</svg>
</body></html>
